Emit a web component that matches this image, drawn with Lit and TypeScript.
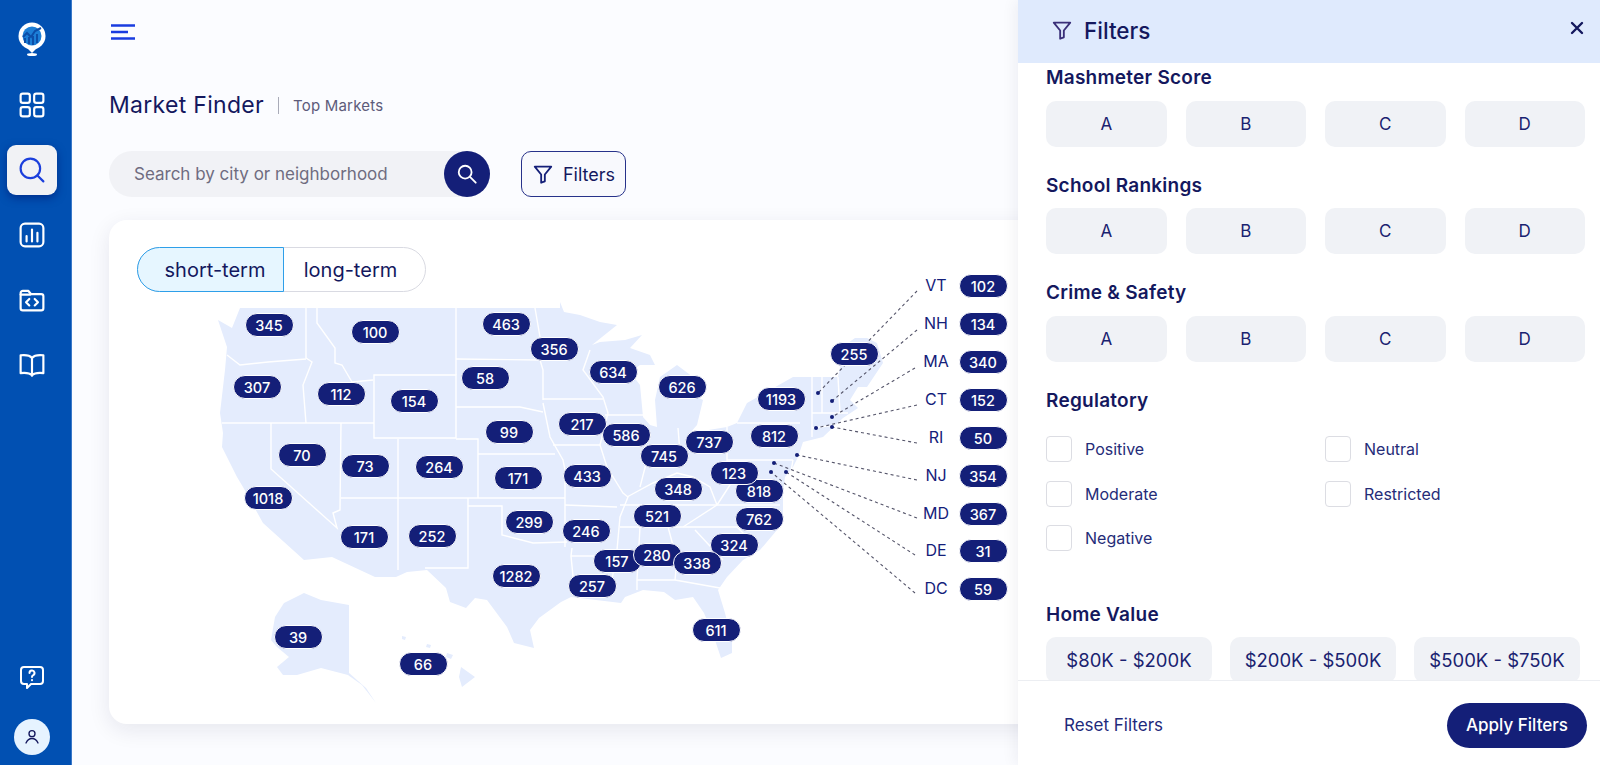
import { LitElement, html, css, svg } from "lit";
import { customElement } from "lit/decorators.js";

const NAVY = "#141f78";
const OX = 109, OY = 300;

const PILLS: [string, number, number][] = [
  ["345",269,325],["100",375,332],["463",506,324],["356",554,349],["307",257,387],["112",341,394],
  ["154",414,401],["58",485,378],["99",509,432],["217",582,424],["70",302,455],["73",365,466],
  ["264",439,467],["171",518,478],["433",587,476],["1018",268,498],["171",364,537],["252",432,536],
  ["299",529,522],["246",586,531],["634",613,372],["626",682,387],["255",854,354],["1193",781,399],
  ["586",626,435],["737",709,442],["812",774,436],["745",664,456],["818",759,491],["123",734,473],
  ["348",678,489],["521",657,516],["762",759,519],["324",734,545],["157",617,561],["280",657,555],
  ["338",697,563],["257",592,586],["1282",516,576],["611",716,630],["39",298,637],["66",423,664],
];

const LEADERS: [string, string, number, number, number, number, number][] = [
  ["VT","102",286,917,291,818,393],["NH","134",324,917,330,832,401],["MA","340",362,915,368,832,417],
  ["CT","152",400,917,405,816,428],["RI","50",438,917,443,832,427],["NJ","354",476,917,480,797,455],
  ["MD","367",514,917,518,774,463],["DE","31",551,915,555,786,472],["DC","59",589,915,593,771,472],
];

const LAND = [
  "M240,308 L560,308 560,302 564,312 580,315 600,322 617,325 592,345 600,342 625,340 642,335 630,348 650,355 655,365 640,365 630,372 640,385 643,417 650,425 657,427 655,400 660,377 677,365 693,377 693,395 703,400 697,425 690,433 727,427 737,423 747,403 793,377 838,377 845,345 855,338 867,338 877,343 883,363 867,387 858,387 850,400 858,408 843,418 823,437 803,442 798,457 793,467 785,477 783,493 783,517 777,530 760,550 743,560 727,577 718,590 725,613 732,640 732,653 721,658 714,637 704,613 693,597 675,600 664,592 643,590 625,597 621,603 571,597 561,602 539,618 530,630 534,648 514,643 507,627 487,600 475,598 466,608 450,602 446,588 427,570 407,572 396,577 375,577 332,557 304,560 263,523 243,487 237,477 222,447 223,433 220,413 225,370 227,347 218,320 232,328 Z",
  "M304,593 284,603 275,617 271,640 277,647 289,657 277,667 283,675 297,675 321,668 348,675 362,685 376,703 366,688 349,673 349,605 321,600 Z",
  "M461,667 475,677 462,687 459,677 Z",
  "M447,653 453,655 451,659 446,657 Z",
  "M427,644 431,645 430,648 426,647 Z",
  "M402,636 406,637 405,640 402,639 Z",
];

const BORDERS = [
  "M306,308 306,358 312,362 303,385 306,423","M227,355 240,365 268,362 306,359",
  "M317,308 317,323 335,348 335,363 342,365 352,382 373,380","M374,375 456,375 456,438 374,438 Z",
  "M456,308 456,375","M456,359 540,360","M535,308 540,337 540,360 543,370 543,400",
  "M456,407 520,407 543,412","M456,439 478,439 478,498","M478,454 555,454",
  "M543,403 550,437 563,460 565,470 565,547","M222,423 374,423",
  "M271,423 271,469 337,528 333,513 340,510 341,423","M341,498 478,498 565,498","M398,439 398,570",
  "M468,498 468,568 425,568","M468,506 502,506 502,535 533,543 567,542","M572,548 571,556 573,576 575,597",
  "M565,505 617,507","M571,556 596,556","M543,399 603,399","M553,445 600,445",
  "M590,350 583,370 603,397 608,413 600,445 607,467 623,493 628,497 620,517 617,550 612,580",
  "M605,415 643,415","M643,428 647,460 640,487","M678,428 680,453","M627,497 653,483 677,473 693,477 710,487 717,505",
  "M620,505 780,505","M683,527 717,505","M620,527 737,527 757,547","M640,527 637,580 637,590","M668,527 677,560 675,580",
  "M637,580 675,580 720,588","M695,530 723,560","M737,423 800,423","M727,460 793,460","M727,427 727,460",
  "M812,377 812,413 812,437","M822,377 822,413","M838,377 840,413","M812,413 848,413","M812,428 843,424",
  "M793,460 790,477","M727,460 730,485 717,505",
];

@customElement("app-root")
export class AppRoot extends LitElement {
  static styles = css`
    :host { display: block; height: 765px; font-family: Inter, "Noto Sans", sans-serif; color: #14185e; }
    * { box-sizing: border-box; }
    .app { display: flex; height: 765px; overflow: hidden; position: relative; background: #fbfcff; }
    .side { width: 72px; flex: none; background: #0150b2; border-right: 1px solid #3a78c8; display: flex; flex-direction: column; padding: 22px 15px 10px 7px; }
    .logo { width: 50px; height: 34px; display: flex; justify-content: center; margin-bottom: 24px; }
    .nav { display: flex; flex-direction: column; gap: 15px; }
    .nav-item { width: 50px; height: 50px; display: flex; align-items: center; justify-content: center; border-radius: 9px; }
    .nav-item.on { background: #f1f2f5; box-shadow: 0 3px 8px rgba(0,20,110,.55); }
    .side-bottom { margin-top: auto; display: flex; flex-direction: column; align-items: center; gap: 30px; }
    .avatar { width: 36px; height: 36px; border-radius: 50%; background: #e6f3ff; display: flex; align-items: center; justify-content: center; }
    svg { display: block; }
    .main { flex: 1; min-width: 0; padding: 24px 0 0 37px; }
    .burger { margin-left: 2px; }
    .title-row { display: flex; align-items: center; height: 30px; margin-top: 50px; }
    h1 { margin: 0; font-size: 23px; font-weight: 400; letter-spacing: .3px; color: #14185e; }
    .sep { width: 1px; height: 17px; background: #a9abb8; margin: 0 14px; }
    .crumb { font-size: 15px; color: #5d5b7a; letter-spacing: .2px; }
    .search-row { display: flex; margin-top: 31px; height: 46px; }
    .search { width: 381px; background: #f1f2f6; border-radius: 23px; display: flex; align-items: center; justify-content: space-between; padding-left: 25px; font-size: 17px; color: #6f6c80; }
    .search-btn { width: 46px; height: 46px; border-radius: 50%; background: #141f78; display: flex; align-items: center; justify-content: center; }
    .filter-btn { margin-left: 31px; width: 105px; border: 1px solid #27328a; border-radius: 10px; background: #f8f9fd; display: flex; align-items: center; justify-content: center; gap: 9px; font-size: 18px; color: #14185e; }
    .card { margin-top: 23px; width: 940px; height: 504px; background: #fff; border-radius: 18px; box-shadow: 0 6px 22px rgba(20,25,70,.09); padding: 27px 0 0 28px; display: flex; flex-direction: column; }
    .tabs { display: flex; width: 289px; height: 45px; border: 1px solid #d9dae2; border-radius: 23px; font-size: 20px; }
    .tab { display: flex; align-items: center; justify-content: center; }
    .tab.a { width: 147px; margin: -1px 0 -1px -1px; padding-left: 9px; background: #e6f6ff; border: 1px solid #2e9fe9; border-radius: 23px 0 0 23px; }
    .tab.b { flex: 1; padding-right: 8px; }
    .canvas { position: relative; width: 909px; height: 424px; margin: 8px 0 0 -28px; flex: none; }
    .canvas svg { position: absolute; left: 0; top: 0; overflow: visible; }
    .pill { position: absolute; width: 49px; height: 24px; margin: -12px 0 0 -24.5px; background: #141f78; border: 1px solid #fff; border-radius: 12px; color: #fff; font-size: 14.5px; font-weight: 500; display: flex; align-items: center; justify-content: center; }
    .abbr { position: absolute; width: 40px; margin: -12px 0 0 -19px; height: 22px; line-height: 22px; text-align: center; font-size: 16px; color: #14207a; }
    .panel { position: absolute; right: 0; top: 0; width: 582px; height: 765px; background: #fff; box-shadow: -3px 0 14px rgba(20,25,70,.06); display: flex; flex-direction: column; }
    .p-head { height: 63px; flex: none; background: #dfeafd; display: flex; align-items: center; justify-content: space-between; padding: 0 16px 3px 33px; }
    .p-title { display: flex; align-items: center; gap: 11px; font-size: 22.500px; font-weight: 500; color: #14185e; }
    .close { margin-top: -4px; }
    .p-body { flex: 1; min-height: 0; overflow: hidden; padding: 1px 15px 0 28px; }
    h3 { margin: 0; height: 26px; line-height: 28px; font-size: 19px; font-weight: 600; letter-spacing: .25px; color: #14185e; white-space: nowrap; }
    .grade { display: grid; grid-template-columns: repeat(4, 120.5px); gap: 19px; margin-top: 10.5px; margin-bottom: 25px; }
    .opt { height: 46px; background: #f0f2f6; border-radius: 10px; display: flex; align-items: center; justify-content: center; font-size: 17px; color: #1a2270; }
    .checks { display: grid; grid-template-columns: 279px 1fr; row-gap: 18.5px; margin-top: 23.5px; margin-bottom: 50px; }
    .check { display: flex; align-items: center; height: 26px; font-size: 16px; color: #252c78; }
    .box { width: 26px; height: 26px; border: 1px solid #dcdde3; border-radius: 4px; background: #fff; margin-right: 13px; }
    .value { display: grid; grid-template-columns: repeat(3, 166px); gap: 18px; margin-top: 10px; }
    .value .opt { font-size: 18.5px; }
    .p-foot { height: 85px; flex: none; border-top: 1px solid #eceef2; display: flex; align-items: center; justify-content: space-between; padding: 4px 13px 0 46px; background: #fff; }
    .reset { font-size: 17px; color: #1f2a7c; }
    .apply { width: 140px; height: 45px; border-radius: 23px; background: #141f78; color: #fff; font-size: 17px; font-weight: 500; display: flex; align-items: center; justify-content: center; }
  `;

  private icon(body: unknown, color = "#fff", size = 26, sw = 2) {
    return html`<svg width=${size} height=${size} viewBox="0 0 24 24" fill="none" stroke=${color} stroke-width=${sw} stroke-linecap="round" stroke-linejoin="round">${body}</svg>`;
  }

  private funnel(size: number, color: string) {
    return this.icon(svg`<path d="M3 4h18l-7 8.500V20l-4 1.500v-9z"/>`, color, size, 2);
  }

  render() {
    return html`<div class="app">
      <aside class="side">
        <div class="logo">
          <svg width="30" height="34" viewBox="0 0 30 34">
            <circle cx="15" cy="14" r="13.5" fill="#fff"/>
            <path d="M9 25 L15 31 L21 25 Z" fill="#fff"/>
            <ellipse cx="15" cy="32.5" rx="5" ry="1.5" fill="#fff"/>
            <circle cx="15" cy="14" r="9.5" fill="#1c7ed6"/>
            <path d="M6 15 L10 11 L14 15 L18 9 L24 6" fill="none" stroke="#0c4ea8" stroke-width="2"/>
            <path d="M8 21 V16 M12 22 V15 M16 23 V14 M20 21 V12" stroke="#0c4ea8" stroke-width="2"/>
          </svg>
        </div>
        <nav class="nav">
          <div class="nav-item">${this.icon(svg`<rect x="1.5" y="1.5" width="8.5" height="8.5" rx="2"/><rect x="14" y="1.5" width="8.5" height="8.5" rx="2"/><rect x="1.5" y="14" width="8.5" height="8.5" rx="2"/><rect x="14" y="14" width="8.5" height="8.5" rx="2"/>`)}</div>
          <div class="nav-item on">${this.icon(svg`<circle cx="10.5" cy="10.5" r="9"/><path d="M17 17l5.500 5.500"/>`, "#1b3fdc", 26, 2)}</div>
          <div class="nav-item">${this.icon(svg`<rect x="1.5" y="1.5" width="21" height="21" rx="4"/><path d="M7 18v-5M12 18V7M17 18v-8"/>`)}</div>
          <div class="nav-item">${this.icon(svg`<path d="M1.500 5.500a2 2 0 0 1 2-2h5l2.500 3h9.500a2 2 0 0 1 2 2v11a2 2 0 0 1-2 2h-17a2 2 0 0 1-2-2z"/><path d="M9.500 11l-3 3 3 3M14.500 11l3 3-3 3"/><path d="M1.500 7h9"/>`)}</div>
          <div class="nav-item">${this.icon(svg`<path d="M12 5.500C10 3 6 2.500 1.500 3v16.500c4.500-.5 8.500 0 10.500 2 2-2 6-2.500 10.500-2V3C18 2.500 14 3 12 5.500zM12 5.500V22"/>`)}</div>
        </nav>
        <div class="side-bottom">
          ${this.icon(svg`<path d="M4 2h16a3 3 0 0 1 3 3v11a3 3 0 0 1-3 3h-9l-4 4v-4H4a3 3 0 0 1-3-3V5a3 3 0 0 1 3-3z"/><path d="M9.500 8a2.500 2.500 0 1 1 3.500 2.300c-.7.400-1 .8-1 1.700"/><path d="M12 15v.2"/>`, "#fff", 24, 2)}
          <div class="avatar">${this.icon(svg`<circle cx="12" cy="7.500" r="4"/><path d="M4 20c2-4.500 5-6 8-6s6 1.500 8 6"/>`, "#14185e", 18, 1.8)}</div>
        </div>
      </aside>
      <main class="main">
        <svg class="burger" width="24" height="16" viewBox="0 0 24 16" fill="none" stroke="#1a3ce0" stroke-width="2.4"><path d="M0 1.500h24M0 8h17M0 14.500h24"/></svg>
        <div class="title-row"><h1>Market Finder</h1><span class="sep"></span><span class="crumb">Top Markets</span></div>
        <div class="search-row">
          <div class="search"><span>Search by city or neighborhood</span>
            <div class="search-btn">${this.icon(svg`<circle cx="10" cy="10" r="7"/><path d="M15.500 15.500l6 6"/>`, "#fff", 22, 2)}</div></div>
          <div class="filter-btn">${this.funnel(22, NAVY)}<span>Filters</span></div>
        </div>
        <section class="card">
          <div class="tabs"><div class="tab a">short-term</div><div class="tab b">long-term</div></div>
          <div class="canvas">
            <svg width="909" height="424" viewBox="${OX} ${OY} 909 424">
              ${LAND.map((d) => svg`<path d=${d} fill="#e4ecfd"/>`)}
              ${BORDERS.map((d) => svg`<path d=${d} fill="none" stroke="#fff" stroke-width="1.4"/>`)}
              ${LEADERS.map((l) => svg`<path d="M${l[3]},${l[4]} L${l[5]},${l[6]}" stroke="#55556a" stroke-width="1.1" stroke-dasharray="3 3"/><circle cx=${l[5]} cy=${l[6]} r="2" fill="${NAVY}"/>`)}
            </svg>
            ${PILLS.map((p) => html`<div class="pill" style="left:${p[1] - OX}px;top:${p[2] - OY}px">${p[0]}</div>`)}
            ${LEADERS.map((l) => html`<div class="abbr" style="left:${935 - OX}px;top:${l[2] - OY}px">${l[0]}</div><div class="pill" style="left:${983 - OX}px;top:${l[2] - OY}px">${l[1]}</div>`)}
          </div>
        </section>
      </main>
      <aside class="panel">
        <header class="p-head">
          <div class="p-title">${this.funnel(22, "#3a2f78")}<span>Filters</span></div>
          <svg class="close" width="14" height="14" viewBox="0 0 14 14" stroke="#14185e" stroke-width="2.4" stroke-linecap="round"><path d="M2 2l10 10M12 2L2 12"/></svg>
        </header>
        <div class="p-body">
          ${["Mashmeter Score", "School Rankings", "Crime & Safety"].map((t) => html`<h3>${t}</h3>
            <div class="grade">${["A", "B", "C", "D"].map((g) => html`<div class="opt">${g}</div>`)}</div>`)}
          <h3>Regulatory</h3>
          <div class="checks">
            ${["Positive", "Neutral", "Moderate", "Restricted", "Negative"].map((c) => html`<div class="check"><span class="box"></span>${c}</div>`)}
          </div>
          <h3>Home Value</h3>
          <div class="value">${["$80K - $200K", "$200K - $500K", "$500K - $750K"].map((v) => html`<div class="opt">${v}</div>`)}</div>
        </div>
        <footer class="p-foot"><span class="reset">Reset Filters</span><div class="apply">Apply Filters</div></footer>
      </aside>
    </div>`;
  }
}
